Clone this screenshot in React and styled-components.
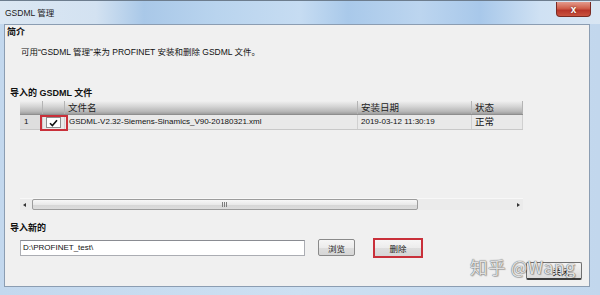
import React from "react";
import styled, { createGlobalStyle } from "styled-components";

const Global = createGlobalStyle`
  html, body {
    margin: 0;
    padding: 0;
    width: 600px;
    height: 295px;
    overflow: hidden;
    background: #c9ddf1;
  }
`;

const cjk = `"Liberation Sans", "Noto Sans CJK SC", sans-serif`;

const Window = styled.div`
  width: 600px;
  height: 295px;
  display: flex;
  flex-direction: column;
  background: linear-gradient(90deg, #c3d8ee 0%, #cde0f2 50%, #c2d7ed 100%);
  font-family: ${cjk};
  color: #111;
`;

const TitleBar = styled.div`
  height: 24px;
  flex: none;
  display: flex;
  align-items: flex-start;
  border-top: 1px solid #6d7d8e;
  box-sizing: border-box;
  background: linear-gradient(
    90deg,
    #dbe7f3 0%,
    #d3e2f1 16%,
    #a9c8e8 24%,
    #b9d4ee 36%,
    #c6dcf2 50%,
    #a9c9ea 58%,
    #bcd5ef 70%,
    #a8c8ea 80%,
    #cfe1f3 90%,
    #d9e6f3 100%
  );
`;

const TitleText = styled.div`
  font-size: 8.5px;
  line-height: 12px;
  margin: 6px 0 0 5px;
  color: #1b1b1b;
`;

const CloseButton = styled.div`
  margin: 1px 9px 0 auto;
  width: 35px;
  height: 15px;
  box-sizing: border-box;
  border: 1px solid #7a2a22;
  border-top: none;
  border-radius: 0 0 4px 4px;
  background: linear-gradient(#e39a8c 0%, #d0604c 45%, #b8362a 60%, #c9533f 100%);
  color: #fff;
  font-size: 10px;
  font-weight: bold;
  display: flex;
  align-items: center;
  justify-content: center;
  text-shadow: 0 0 2px #5a1a12;
`;

const Frame = styled.div`
  flex: 1;
  display: flex;
  padding: 0 10px 8px 4px;
`;

const Panel = styled.div`
  position: relative;
  flex: 1;
  display: flex;
  flex-direction: column;
  border: 1px solid #8b9db2;
  background: #f0f0f0;
`;

const SectionTitle = styled.div`
  font-size: 9px;
  font-weight: bold;
  line-height: 14px;
  margin: ${(p) => p.$top}px 0 0 ${(p) => p.$left}px;
`;

const Desc = styled.div`
  font-size: 8.5px;
  line-height: 14px;
  margin: 6px 0 0 16px;
`;

const ListView = styled.div`
  margin: 1px 0 0 15px;
  width: 503px;
  height: 109px;
  display: flex;
  flex-direction: column;
`;

const Cols = "23px 22px 293px 114px 51px";

const HeaderRow = styled.div`
  display: grid;
  grid-template-columns: ${Cols};
  height: 14px;
  background: linear-gradient(#f0f0f0 0%, #d6d6d6 40%, #b8b8b8 80%, #9e9e9e 100%);
  border-bottom: 1px solid #8e8e8e;
  box-sizing: border-box;
`;

const HeadCell = styled.div`
  font-size: 9.5px;
  line-height: 13px;
  padding-left: 3px;
  border-right: 1px solid #b4b4b4;
  color: #222;
`;

const DataRow = styled.div`
  display: grid;
  grid-template-columns: ${Cols};
  height: 15px;
  background: #e9e9e9;
  border-bottom: 1px solid #c8c8c8;
  box-sizing: border-box;
`;

const Cell = styled.div`
  font-size: ${(p) => (p.$cjk ? 9.5 : 8)}px;
  line-height: 14px;
  padding-left: ${(p) => p.$pad ?? 3}px;
  border-right: 1px solid #d0d0d0;
  background: ${(p) => p.$bg || "transparent"};
  position: relative;
  white-space: nowrap;
`;

const Highlight = styled.div`
  position: absolute;
  border: 2px solid #c9303a;
  box-sizing: border-box;
  left: ${(p) => p.$l}px;
  top: ${(p) => p.$t}px;
  width: ${(p) => p.$w}px;
  height: ${(p) => p.$h}px;
  pointer-events: none;
`;

const CheckBox = styled.div`
  position: absolute;
  left: 3px;
  top: 2px;
  width: 15px;
  height: 11px;
  background: #fff;
  border: 1px solid #8e8e8e;
  box-sizing: border-box;
  display: flex;
  align-items: center;
  justify-content: center;
`;

const Spacer = styled.div`
  flex: 1;
`;

const ScrollBar = styled.div`
  height: 12px;
  display: flex;
  align-items: center;
  background: #ebebeb;
  border-top: 1px solid #f8f8f8;
  box-sizing: border-box;
  padding: 0 3px 0 3px;
  gap: 6px;
`;

const Arrow = styled.div`
  width: 0;
  height: 0;
  border-top: 2.5px solid transparent;
  border-bottom: 2.5px solid transparent;
  ${(p) =>
    p.$dir === "left"
      ? "border-right: 3px solid #333;"
      : "border-left: 3px solid #333;"}
`;

const Track = styled.div`
  flex: 1;
  height: 11px;
  display: flex;
`;

const Thumb = styled.div`
  width: 386px;
  height: 11px;
  box-sizing: border-box;
  border: 1px solid #9c9c9c;
  border-radius: 2px;
  background: linear-gradient(#f7f7f7 0%, #e9e9e9 50%, #d6d6d6 51%, #dcdcdc 100%);
  display: flex;
  align-items: center;
  justify-content: center;
`;

const Grip = styled.div`
  width: 6px;
  height: 5px;
  background: repeating-linear-gradient(90deg, #7c7c7c 0 1px, transparent 1px 2px);
`;

const InputRow = styled.div`
  display: flex;
  align-items: center;
  height: 21px;
  margin: 2px 0 0 15px;
`;

const PathInput = styled.div`
  width: 285px;
  height: 16px;
  box-sizing: border-box;
  background: #fff;
  border: 1px solid #abadb3;
  border-top-color: #8a8c92;
  font-size: 8px;
  line-height: 14px;
  padding-left: 2px;
`;

const Button = styled.div`
  width: ${(p) => p.$w}px;
  height: ${(p) => p.$h}px;
  margin-left: ${(p) => p.$gap}px;
  box-sizing: border-box;
  border: ${(p) => (p.$marked ? "2px solid #c9303a" : "1px solid #8a8a8a")};
  border-radius: ${(p) => (p.$marked ? 0 : 2)}px;
  background: linear-gradient(#f6f6f6 0%, #ececec 50%, #dedede 51%, #d6d6d6 100%);
  font-size: 8.5px;
  display: flex;
  align-items: center;
  justify-content: center;
  color: #222;
`;

const Footer = styled.div`
  display: flex;
  justify-content: flex-end;
  margin-top: 4px;
  padding-right: 7px;
`;

const CloseDialogButton = styled.div`
  width: 56px;
  height: 18px;
  box-sizing: border-box;
  border: 1px solid #707070;
  border-bottom: 2px solid #3c3c3c;
  border-radius: 2px;
  background: linear-gradient(#f4f4f4, #dcdcdc);
  font-size: 8.5px;
  display: flex;
  align-items: center;
  justify-content: center;
  padding-left: 14px;
`;

const Watermark = styled.div`
  position: absolute;
  left: 465px;
  top: 232px;
  font-family: "Noto Sans CJK SC", "Liberation Sans", sans-serif;
  font-size: 17.5px;
  line-height: 20px;
  letter-spacing: 0.6px;
  color: rgba(240, 240, 240, 0.9);
  text-shadow: 0 0 1px #6e6e6e, 0 0 1px #6e6e6e, 1px 1px 1px rgba(0, 0, 0, 0.25);
  white-space: nowrap;
  pointer-events: none;
`;

const Check = () => (
  <svg width="9" height="8" viewBox="0 0 9 8">
    <path d="M1 4.2 L3.4 6.6 L8 1.2" fill="none" stroke="#111" strokeWidth="1.6" />
  </svg>
);

export default function App() {
  return (
    <>
      <Global />
      <Window>
        <TitleBar>
          <TitleText>GSDML 管理</TitleText>
          <CloseButton>x</CloseButton>
        </TitleBar>
        <Frame>
          <Panel>
            <SectionTitle $top={0} $left={2}>
              简介
            </SectionTitle>
            <Desc>可用“GSDML 管理”来为 PROFINET 安装和删除 GSDML 文件。</Desc>
            <SectionTitle $top={27} $left={5}>
              导入的 GSDML 文件
            </SectionTitle>
            <ListView>
              <HeaderRow>
                <HeadCell />
                <HeadCell />
                <HeadCell>文件名</HeadCell>
                <HeadCell>安装日期</HeadCell>
                <HeadCell>状态</HeadCell>
              </HeaderRow>
              <DataRow>
                <Cell $pad={4} $bg="#dedede">
                  1
                </Cell>
                <Cell>
                  <CheckBox>
                    <Check />
                  </CheckBox>
                  <Highlight $l={-3} $t={0} $w={28} $h={16} />
                </Cell>
                <Cell $pad={4}>GSDML-V2.32-Siemens-Sinamics_V90-20180321.xml</Cell>
                <Cell>2019-03-12 11:30:19</Cell>
                <Cell $cjk>正常</Cell>
              </DataRow>
              <Spacer />
              <ScrollBar>
                <Arrow $dir="left" />
                <Track>
                  <Thumb>
                    <Grip />
                  </Thumb>
                </Track>
                <Arrow $dir="right" />
              </ScrollBar>
            </ListView>
            <SectionTitle $top={11} $left={5}>
              导入新的
            </SectionTitle>
            <InputRow>
              <PathInput>D:\PROFINET_test\</PathInput>
              <Button $w={37} $h={17} $gap={13}>
                浏览
              </Button>
              <Button $w={50} $h={20} $gap={18} $marked>
                删除
              </Button>
            </InputRow>
            <Footer>
              <CloseDialogButton>关闭</CloseDialogButton>
            </Footer>
            <Watermark>知乎 @Wang</Watermark>
          </Panel>
        </Frame>
      </Window>
    </>
  );
}
